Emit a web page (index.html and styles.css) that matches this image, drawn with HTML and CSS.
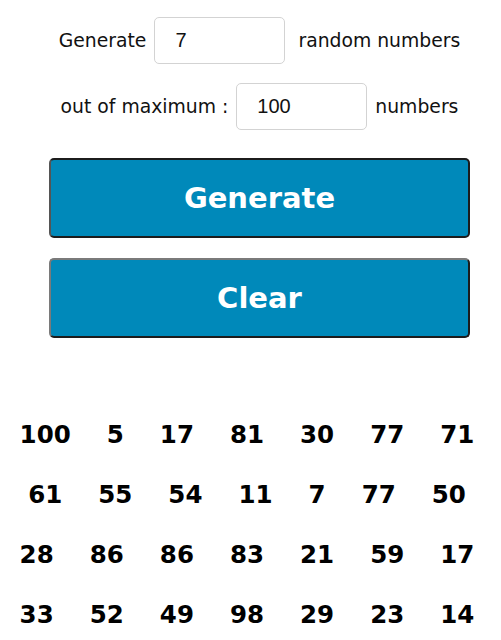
FILE: index.html
```html
<!DOCTYPE html>
<html lang="en">

<head>
    <meta charset="UTF-8">
    <meta name="viewport" content="width=device-width, initial-scale=1.0">
    <link rel="stylesheet" href="styles.css">
</head>

<body>
    <div class="container">
        <div class="field-row">
            <label for="count" class="label-left">Generate</label>
            <input class="num-input" id="count" type="text" value="7" />
            <span class="label-right wide">random numbers</span>
        </div>
        <div class="field-row">
            <label for="max" class="label-left">out of maximum :</label>
            <input class="num-input" id="max" type="text" value="100" />
            <span class="label-right">numbers</span>
        </div>

        <button class="action-btn generate-btn" id="generate">Generate</button>
        <button class="action-btn clear-btn" id="clear">Clear</button>
    </div>

    <div class="results" id="results">
        <span class="num">100</span>
        <span class="num">5</span>
        <span class="num">17</span>
        <span class="num">81</span>
        <span class="num">30</span>
        <span class="num">77</span>
        <span class="num">71</span>
        <span class="num">61</span>
        <span class="num">55</span>
        <span class="num">54</span>
        <span class="num">11</span>
        <span class="num">7</span>
        <span class="num">77</span>
        <span class="num">50</span>
        <span class="num">28</span>
        <span class="num">86</span>
        <span class="num">86</span>
        <span class="num">83</span>
        <span class="num">21</span>
        <span class="num">59</span>
        <span class="num">17</span>
        <span class="num">33</span>
        <span class="num">52</span>
        <span class="num">49</span>
        <span class="num">98</span>
        <span class="num">29</span>
        <span class="num">23</span>
        <span class="num">14</span>
    </div>

    <script>
        var countInput = document.getElementById("count");
        var maxInput = document.getElementById("max");
        var results = document.getElementById("results");

        function generateNumbers() {
            var count = parseInt(countInput.value);
            var max = parseInt(maxInput.value);
            if (isNaN(count) || isNaN(max) || count <= 0 || max <= 0) {
                return;
            }
            for (var i = 0; i < count; i++) {
                var span = document.createElement("span");
                span.className = "num";
                span.innerText = Math.floor(Math.random() * max) + 1;
                results.appendChild(span);
            }
        }

        document.getElementById("generate").addEventListener("click", generateNumbers);
        document.getElementById("clear").addEventListener("click", function () {
            results.innerHTML = "";
        });
    </script>
</body>

</html>
```

FILE: styles.css
```css
body {
    margin: 0;
    font-family: "DejaVu Sans", Verdana, sans-serif;
    color: #111;
}

.container {
    width: 421px;
    margin: 17px 0 0 49px;
}

.field-row {
    display: flex;
    align-items: center;
    justify-content: center;
    height: 47px;
    margin-bottom: 19px;
    font-size: 18.8px;
}

.label-left {
    margin-right: 8px;
}

.label-right {
    margin-left: 8px;
}

.label-right.wide {
    margin-left: 13px;
}

.num-input {
    box-sizing: border-box;
    width: 131px;
    height: 47px;
    padding: 0 20px;
    border: 1px solid #d3d3d3;
    border-radius: 5px;
    font-family: "Liberation Sans", Arial, sans-serif;
    font-size: 20px;
    color: #111;
}

.action-btn {
    display: block;
    width: 100%;
    height: 80px;
    border: 2px solid #1c1c1c;
    border-radius: 5px;
    background-color: #0089ba;
    color: #fff;
    font-family: "DejaVu Sans", Verdana, sans-serif;
    font-size: 29px;
    font-weight: bold;
}

.generate-btn {
    margin-top: 28px;
    border-left-color: #555;
}

.clear-btn {
    margin-top: 20px;
    border-top-color: #7a7a7a;
    border-left-color: #7a7a7a;
}

.results {
    display: flex;
    flex-wrap: wrap;
    justify-content: center;
    column-gap: 36px;
    margin-top: 67px;
    padding: 0 15px 0 8px;
}

.num {
    font-size: 24.5px;
    font-weight: bold;
    line-height: 60px;
    color: #000;
}
```
